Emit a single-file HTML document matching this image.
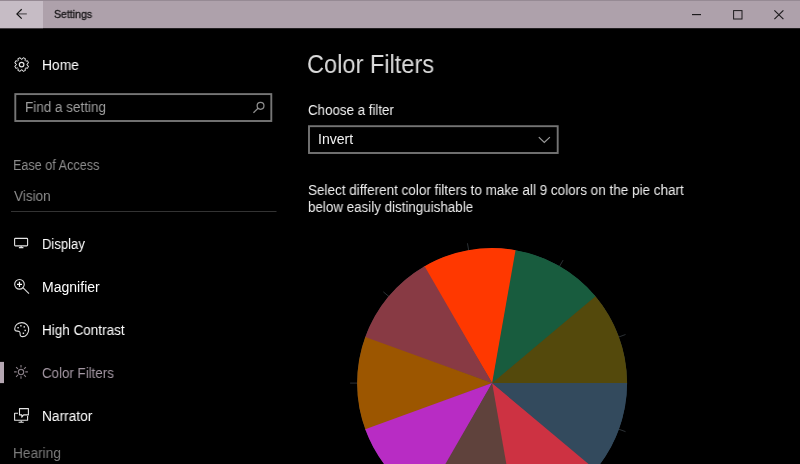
<!DOCTYPE html>
<html><head><meta charset="utf-8">
<style>
html,body{margin:0;padding:0;}
body{width:800px;height:464px;overflow:hidden;background:#000;position:relative;font-family:"Liberation Sans",sans-serif;color:#fff;}
.abs{position:absolute;white-space:nowrap;transform-origin:0 0;}
div.abs{will-change:transform;}
</style></head><body>
<svg class="abs" style="left:0;top:0" width="800" height="464" viewBox="0 0 800 464">
  <!-- title bar -->
  <rect x="0" y="0" width="800" height="28.2" fill="#aea1ab"/>
  <rect x="0" y="0" width="43" height="28.2" fill="#c6bcc5"/>
  <rect x="0" y="0" width="800" height="1" fill="#968a94"/>
  <!-- back arrow -->
  <path d="M17.2 13.9 H26.8" stroke="#4a464a" stroke-width="1.1" fill="none"/>
  <path d="M21.7 9.2 L16.9 13.9 L21.7 18.7" stroke="#111" stroke-width="1.2" fill="none"/>
  <!-- window controls -->
  <g stroke="#1d1b1d" stroke-width="1" fill="none">
    <path d="M692 14.6 H701" stroke-width="1.15"/>
    <rect x="733.6" y="10.6" width="8.4" height="8.4"/>
    <path d="M774.4 10.3 L783.4 19.2 M783.4 10.3 L774.4 19.2" stroke-width="1.15"/>
  </g>
  <!-- search box -->
  <rect x="15.3" y="94.1" width="256" height="26.9" fill="none" stroke="#767676" stroke-width="1.9"/>
  <g stroke="#8e8e8e" stroke-width="1.25" fill="none">
    <circle cx="260.55" cy="105.85" r="3.4"/>
    <path d="M258.1 108.3 L253.4 112.8"/>
  </g>
  <!-- divider -->
  <rect x="11" y="211" width="265.5" height="1" fill="#333"/>
  <!-- selected indicator -->
  <rect x="0" y="361.9" width="4" height="21.2" fill="#b5a7b2"/>
  <!-- dropdown -->
  <rect x="309" y="126.2" width="248.7" height="26.8" fill="none" stroke="#747474" stroke-width="1.9"/>
  <path d="M538.8 137.1 L544.3 142.5 L549.9 137.1" stroke="#999" stroke-width="1.25" fill="none"/>
  <!-- gear -->
  <g stroke="#e4e4e4" stroke-width="1" fill="none" stroke-linejoin="round">
    <path d="M27.02 63.94 L28.50 63.09 L27.52 60.74 L25.88 61.19 L25.01 60.32 L25.46 58.68 L23.11 57.70 L22.26 59.18 L21.04 59.18 L20.19 57.70 L17.84 58.68 L18.29 60.32 L17.42 61.19 L15.78 60.74 L14.80 63.09 L16.28 63.94 L16.28 65.16 L14.80 66.01 L15.78 68.36 L17.42 67.91 L18.29 68.78 L17.84 70.42 L20.19 71.40 L21.04 69.92 L22.26 69.92 L23.11 71.40 L25.46 70.42 L25.01 68.78 L25.88 67.91 L27.52 68.36 L28.50 66.01 L27.02 65.16 Z"/>
    <circle cx="21.6" cy="64.6" r="2.3" stroke-width="1.15"/>
  </g>
  <!-- display -->
  <g stroke="#e4e4e4" stroke-width="1.1" fill="none">
    <rect x="14.6" y="238.4" width="13" height="7.5" rx="0.8"/>
    <path d="M21.15 246 V247.6 M18.9 247.6 H23.4"/>
  </g>
  <!-- magnifier -->
  <g stroke="#dcdcdc" stroke-width="1.1" fill="none">
    <circle cx="19.48" cy="284.36" r="4.8"/>
    <path d="M22.9 287.7 L29 293.6"/>
    <path d="M17 284.36 H22 M19.48 281.85 V286.9" stroke="#fff" stroke-width="1.2"/>
  </g>
  <!-- palette -->
  <g stroke="#dcdcdc" stroke-width="1.1" fill="none">
    <path d="M20.6 335.9 C19.4 334.5 21 332.2 19.2 331.4 C17.5 330.7 14.7 331.8 14.7 328.9 C14.7 325.3 18 322.6 21.8 322.6 C25.8 322.6 28.7 325.7 28.7 329.5 C28.7 333.5 25.9 336.6 22.6 336.6 C21.8 336.6 21.1 336.4 20.6 335.9 Z"/>
  </g>
  <g fill="#e8e8e8">
    <rect x="17.4" y="327" width="1.4" height="1.4"/>
    <rect x="20.2" y="325.1" width="1.4" height="1.4"/>
    <rect x="23.55" y="326.2" width="1.4" height="1.4"/>
    <rect x="24.5" y="329.75" width="1.4" height="1.4"/>
    <rect x="22.7" y="332.55" width="1.4" height="1.4"/>
  </g>
  <!-- sun -->
  <g stroke="#887e86" stroke-width="1.1" fill="none">
    <circle cx="21" cy="372.05" r="2.7"/>
    <path d="M25.30 371.90 L27.90 371.90 M24.04 374.94 L25.88 376.78 M21.00 376.20 L21.00 378.80 M17.96 374.94 L16.12 376.78 M16.70 371.90 L14.10 371.90 M17.96 368.86 L16.12 367.02 M21.00 367.60 L21.00 365.00 M24.04 368.86 L25.88 367.02"/>
  </g>
  <!-- narrator -->
  <g stroke="#e4e4e4" stroke-width="1.1" fill="none" stroke-linejoin="round">
    <path d="M19.5 408.6 H28.4 V414.9 H23.6 L21.8 417.2 V414.9 H19.5 Z"/>
    <path d="M18 413.2 H14.6 V420.2 H27.6 V416"/>
    <path d="M21.2 420.7 V422.3 M18.6 422.3 H23.7"/>
  </g>
  <!-- pie -->
  <circle cx="492.1" cy="383.1" r="134.8" fill="#334a5d"/>
<path d="M618.49 337.10 L625.54 334.53 M559.35 266.62 L563.10 260.12 M468.74 250.64 L467.44 243.26 M389.07 296.65 L383.32 291.82 M357.60 383.10 L350.10 383.10 M389.07 469.55 L383.32 474.38 M468.74 515.56 L467.44 522.94 M559.35 499.58 L563.10 506.08 M618.49 429.10 L625.54 431.67" stroke="#2b3034" stroke-width="1" fill="none"/>
<path d="M492.10 383.10 L627.10 383.10 A135 135 0 0 0 594.60 295.25 Z" fill="#54490c"/>
<path d="M492.10 383.10 L595.52 296.32 A135 135 0 0 0 514.15 249.91 Z" fill="#185c3e"/>
<path d="M492.10 383.10 L515.54 250.15 A135 135 0 0 0 423.38 266.90 Z" fill="#ff3800"/>
<path d="M492.10 383.10 L424.60 266.19 A135 135 0 0 0 364.76 338.26 Z" fill="#883a44"/>
<path d="M492.10 383.10 L365.24 336.93 A135 135 0 0 0 365.73 430.60 Z" fill="#9c5600"/>
<path d="M492.10 383.10 L365.24 429.27 A135 135 0 0 0 425.83 500.71 Z" fill="#b82cc4"/>
<path d="M492.10 383.10 L424.60 500.01 A135 135 0 0 0 516.93 515.80 Z" fill="#5f423c"/>
<path d="M492.10 383.10 L515.54 516.05 A135 135 0 0 0 596.42 468.79 Z" fill="#cd3242"/>
<path d="M492.10 383.10 L595.52 469.88 A135 135 0 0 0 627.10 383.10 Z" fill="#334a5d"/>
</svg>
<div id="settings" class="abs" style="left:54.30px;top:8.90px;font-size:11px;line-height:11px;color:#1c1a1c;transform:scaleX(0.9582);-webkit-text-stroke:0.35px #1c1a1c;">Settings</div>
<div id="home" class="abs" style="left:41.80px;top:58.33px;font-size:14px;line-height:14px;color:#ffffff;transform:scaleX(0.9866);">Home</div>
<div id="find" class="abs" style="left:24.70px;top:99.53px;font-size:14px;line-height:14px;color:#9e9e9e;transform:scaleX(0.9637);">Find a setting</div>
<div id="ease" class="abs" style="left:12.95px;top:157.53px;font-size:14px;line-height:14px;color:#8c8c8c;transform:scaleX(0.9019);">Ease of Access</div>
<div id="vision" class="abs" style="left:14.30px;top:188.53px;font-size:14px;line-height:14px;color:#8c8c8c;transform:scaleX(0.9696);">Vision</div>
<div id="display" class="abs" style="left:42.20px;top:237.33px;font-size:14px;line-height:14px;color:#ffffff;transform:scaleX(0.9332);">Display</div>
<div id="magnifier" class="abs" style="left:42.45px;top:279.53px;font-size:14px;line-height:14px;color:#ffffff;transform:scaleX(1.0027);">Magnifier</div>
<div id="highc" class="abs" style="left:42.20px;top:323.33px;font-size:14px;line-height:14px;color:#ffffff;transform:scaleX(0.9647);">High Contrast</div>
<div id="colorf" class="abs" style="left:41.70px;top:365.53px;font-size:14px;line-height:14px;color:#a598a4;transform:scaleX(0.9519);">Color Filters</div>
<div id="narrator" class="abs" style="left:42.20px;top:408.53px;font-size:14px;line-height:14px;color:#ffffff;transform:scaleX(0.9800);">Narrator</div>
<div id="hearing" class="abs" style="left:12.70px;top:446.13px;font-size:14px;line-height:14px;color:#7c7c7c;transform:scaleX(0.9772);">Hearing</div>
<div id="title" class="abs" style="left:306.80px;top:52.38px;font-size:25px;line-height:25px;color:#dcdcdc;transform:scaleX(0.9429);">Color Filters</div>
<div id="choose" class="abs" style="left:307.50px;top:103.33px;font-size:14px;line-height:14px;color:#f2f2f2;transform:scaleX(0.9516);">Choose a filter</div>
<div id="invert" class="abs" style="left:317.75px;top:132.08px;font-size:14px;line-height:14px;color:#f2f2f2;transform:scaleX(1.0047);">Invert</div>
<div id="sel1" class="abs" style="left:307.75px;top:182.83px;font-size:14px;line-height:14px;color:#ededed;transform:scaleX(0.9645);">Select different color filters to make all 9 colors on the pie chart</div>
<div id="sel2" class="abs" style="left:307.75px;top:199.68px;font-size:14px;line-height:14px;color:#ededed;transform:scaleX(0.9556);">below easily distinguishable</div>
</body></html>
